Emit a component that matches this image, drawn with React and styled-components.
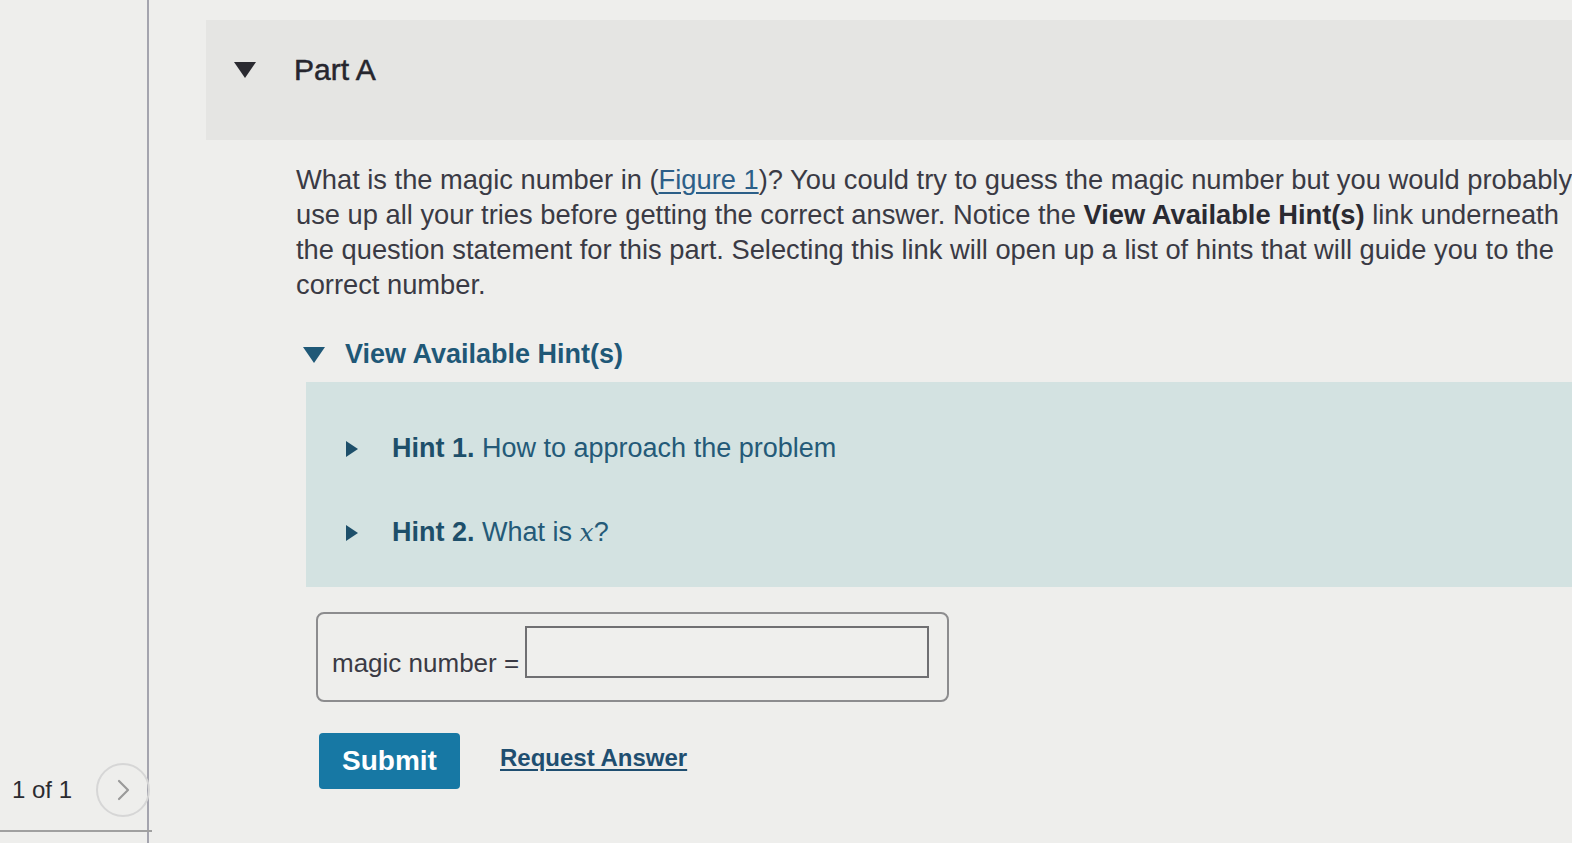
import React from "react";
import styled, { createGlobalStyle } from "styled-components";

const GlobalStyle = createGlobalStyle`
    html, body {
        margin: 0;
        padding: 0;
        background: #eeeeec;
        font-family: "Liberation Sans", Arial, Helvetica, sans-serif;
    }
`

const Page = styled.div`
    display: flex;
    width: 1572px;
    height: 843px;
    overflow: hidden;
    background: #eeeeec;
`

const Sidebar = styled.aside`
    width: 147px;
    flex-shrink: 0;
    border-right: 2px solid #a4a4ae;
    display: flex;
    flex-direction: column;
    justify-content: flex-end;
`

const Pager = styled.div`
    display: flex;
    align-items: center;
    gap: 24px;
    padding: 0 0 13px 12px;
    margin-right: -5px;
    border-bottom: 2px solid #a0a0a0;
    margin-bottom: 11px;
    font-size: 24px;
    color: #2b2b30;
`

const NextButton = styled.div`
    width: 50px;
    height: 50px;
    border-radius: 50%;
    border: 2px solid #d6d6d6;
    display: flex;
    align-items: center;
    justify-content: center;
    color: #9a9a9a;
`

const Main = styled.main`
    flex: 1;
    padding: 20px 0 0 57px;
    min-width: 0;
`

const PartHeader = styled.div`
    height: 120px;
    background: #e5e5e3;
    display: flex;
    align-items: center;
    gap: 38px;
    padding-left: 28px;
    padding-bottom: 20px;
    box-sizing: border-box;
    font-size: 30px;
    color: #26262e;

    span:last-child {
        -webkit-text-stroke: 0.5px #26262e;
    }
`

const Triangle = styled.span`
    display: inline-block;
    width: 0;
    height: 0;
    border-style: solid;
    border-color: transparent;
    ${props => props.dir === "down" ? `
        border-width: ${props.size * 0.75}px ${props.size / 2}px 0 ${props.size / 2}px;
        border-top-color: ${props.color};
    ` : `
        border-width: ${props.size / 2}px 0 ${props.size / 2}px ${props.size * 0.75}px;
        border-left-color: ${props.color};
    `}
`

const Body = styled.div`
    padding-left: 90px;
`

const Question = styled.p`
    margin: 22px 0 0 0;
    font-size: 27.3px;
    line-height: 35px;
    color: #3a3a44;
    white-space: nowrap;

    a {
        color: #2c5f88;
        text-decoration: underline;
        text-underline-offset: 3px;
    }

    b {
        color: #2a2a32;
    }
`

const HintToggle = styled.div`
    display: flex;
    align-items: center;
    gap: 20px;
    margin: 37px 0 0 7px;
    font-size: 27px;
    font-weight: bold;
    color: #1f5877;
`

const HintsPanel = styled.div`
    margin: 12px 0 0 10px;
    height: 205px;
    background: #d3e2e1;
    display: flex;
    flex-direction: column;
    justify-content: center;
    gap: 53px;
    padding: 12px 0 0 40px;
    box-sizing: border-box;
`

const Hint = styled.div`
    display: flex;
    align-items: center;
    gap: 34px;
    font-size: 27px;
    color: #245a78;

    b {
        color: #1d4f6a;
    }

    i {
        font-family: "DejaVu Serif", "Liberation Serif", serif;
        font-size: 25px;
    }
`

const AnswerBox = styled.div`
    margin: 25px 0 0 20px;
    width: 633px;
    height: 90px;
    box-sizing: border-box;
    border: 2px solid #8c8c8e;
    border-radius: 8px;
    display: flex;
    align-items: center;
    gap: 6px;
    padding: 0 18px 10px 14px;
    font-size: 26px;
    color: #3a3a44;

    span {
        padding-top: 22px;
    }
`

const Input = styled.input`
    flex: 1;
    height: 52px;
    box-sizing: border-box;
    border: 2px solid #6f6f72;
    background: #efefed;
    outline: none;
`

const Actions = styled.div`
    display: flex;
    align-items: center;
    gap: 40px;
    margin: 31px 0 0 23px;
`

const SubmitButton = styled.button`
    width: 141px;
    height: 56px;
    border: none;
    border-radius: 4px;
    background: #1778a4;
    color: white;
    font-family: inherit;
    font-size: 28px;
    font-weight: bold;
`

const RequestLink = styled.a`
    font-size: 24px;
    font-weight: bold;
    color: #1f4e70;
    text-decoration: underline;
    text-underline-offset: 3px;
    margin-top: -6px;
`

const App = () => {
    return (
        <>
        <GlobalStyle />
        <Page>
            <Sidebar>
                <Pager>
                    <span>1 of 1</span>
                    <NextButton>
                        <svg width="22" height="26" viewBox="0 0 22 26" fill="none">
                            <path d="M7 4 L16 13 L7 22" stroke="currentColor" strokeWidth="2.2" strokeLinecap="round" strokeLinejoin="round" />
                        </svg>
                    </NextButton>
                </Pager>
            </Sidebar>
            <Main>
                <PartHeader>
                    <Triangle dir="down" size={22} color="#2a2a30" />
                    <span>Part A</span>
                </PartHeader>
                <Body>
                    <Question>
                        What is the magic number in (<a>Figure 1</a>)? You could try to guess the magic number but you would probably<br />
                        use up all your tries before getting the correct answer. Notice the <b>View Available Hint(s)</b> link underneath<br />
                        the question statement for this part. Selecting this link will open up a list of hints that will guide you to the<br />
                        correct number.
                    </Question>
                    <HintToggle>
                        <Triangle dir="down" size={22} color="#1f5877" />
                        <span>View Available Hint(s)</span>
                    </HintToggle>
                    <HintsPanel>
                        <Hint>
                            <Triangle dir="right" size={16} color="#1d4f6a" />
                            <span><b>Hint 1.</b> How to approach the problem</span>
                        </Hint>
                        <Hint>
                            <Triangle dir="right" size={16} color="#1d4f6a" />
                            <span><b>Hint 2.</b> What is <i>x</i>?</span>
                        </Hint>
                    </HintsPanel>
                    <AnswerBox>
                        <span>magic number =</span>
                        <Input type="text" />
                    </AnswerBox>
                    <Actions>
                        <SubmitButton>Submit</SubmitButton>
                        <RequestLink>Request Answer</RequestLink>
                    </Actions>
                </Body>
            </Main>
        </Page>
        </>
    )
}

export default App
